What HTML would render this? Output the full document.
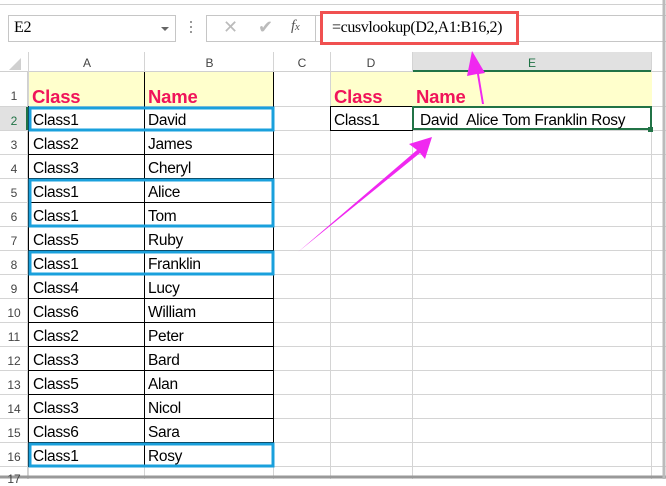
<!DOCTYPE html>
<html><head><style>
body{margin:0;width:666px;height:479px;overflow:hidden;background:#fff;font-family:"Liberation Sans",Arial,sans-serif;position:relative}
.a{position:absolute;box-sizing:border-box}
.t{position:absolute;font-size:15.5px;color:#000;white-space:nowrap;letter-spacing:-0.3px}
.h{position:absolute;font-size:12px;color:#444;text-align:center}
.hd{position:absolute;font-size:18.5px;font-weight:bold;color:#f0145a;letter-spacing:-0.2px}
</style></head><body>
<div class="a" style="left:0;top:4px;width:666px;height:1px;background:#d0d0d0"></div>
<div class="a" style="left:8px;top:15px;width:168px;height:27px;border:1px solid #c6c6c6"></div>
<div class="t" style="left:14px;top:19px;font-family:'Liberation Serif',serif;font-size:16px">E2</div>
<div class="a" style="left:161px;top:27px;width:0;height:0;border-left:4px solid transparent;border-right:4px solid transparent;border-top:4px solid #666"></div>
<div class="a" style="left:190px;top:21px;width:2px;height:2px;background:#999"></div>
<div class="a" style="left:190px;top:26px;width:2px;height:2px;background:#999"></div>
<div class="a" style="left:190px;top:31px;width:2px;height:2px;background:#999"></div>
<div class="a" style="left:206px;top:15px;width:110px;height:27px;border:1px solid #c6c6c6"></div>
<div class="t" style="left:223px;top:17px;color:#bbb;font-size:18px">✕</div>
<div class="t" style="left:258px;top:17px;color:#bbb;font-size:18px">✔</div>
<div class="t" style="left:291px;top:18px;color:#555;font-family:'Liberation Serif',serif;font-style:italic;font-size:15px">f<span style="font-size:11px">x</span></div>
<div class="a" style="left:316px;top:15px;width:350px;height:27px;border-top:1px solid #c6c6c6;border-bottom:1px solid #c6c6c6"></div>
<div class="a" style="left:320px;top:11px;width:199px;height:34px;border:3px solid #f05050;background:#fff"></div>
<div class="t" style="left:332px;top:19px;font-family:'Liberation Serif',serif;font-size:16px;letter-spacing:-0.4px">=cusvlookup(D2,A1:B16,2)</div>

<div class="a" style="left:0;top:52px;width:666px;height:20px;background:#fff;border-bottom:1px solid #d0d0d0"></div>
<div class="a" style="left:412px;top:52px;width:240px;height:20px;background:#e1e1e1;border-bottom:2px solid #217346"></div>
<div class="a" style="left:9px;top:58px;width:0;height:0;border-left:12px solid transparent;border-bottom:12px solid #d0d0d0"></div>
<div class="a" style="left:0;top:72px;width:28px;height:407px;border-right:1px solid #d0d0d0"></div>
<div class="a" style="left:0;top:107px;width:28px;height:24px;background:#e1e1e1;border-right:2px solid #217346"></div>
<div class="h" style="left:29px;top:56px;width:116px">A</div>
<div class="h" style="left:145px;top:56px;width:129px">B</div>
<div class="h" style="left:274px;top:56px;width:56px">C</div>
<div class="h" style="left:330px;top:56px;width:82px">D</div>
<div class="h" style="left:412px;top:56px;width:240px;color:#217346">E</div>

<svg class="a" style="left:0;top:0" width="666" height="479">
<g stroke="#d4d4d4" stroke-width="1">
<line x1="28.5" y1="52" x2="28.5" y2="479"/><line x1="144.5" y1="52" x2="144.5" y2="479"/><line x1="273.5" y1="52" x2="273.5" y2="479"/><line x1="330.5" y1="52" x2="330.5" y2="479"/><line x1="412.5" y1="52" x2="412.5" y2="479"/><line x1="651.5" y1="52" x2="651.5" y2="479"/>
<line x1="0" y1="106.5" x2="666" y2="106.5"/>
<line x1="0" y1="130.5" x2="666" y2="130.5"/><line x1="0" y1="154.5" x2="666" y2="154.5"/><line x1="0" y1="178.5" x2="666" y2="178.5"/><line x1="0" y1="202.5" x2="666" y2="202.5"/><line x1="0" y1="226.5" x2="666" y2="226.5"/><line x1="0" y1="250.5" x2="666" y2="250.5"/><line x1="0" y1="274.5" x2="666" y2="274.5"/><line x1="0" y1="298.5" x2="666" y2="298.5"/><line x1="0" y1="322.5" x2="666" y2="322.5"/><line x1="0" y1="346.5" x2="666" y2="346.5"/><line x1="0" y1="370.5" x2="666" y2="370.5"/><line x1="0" y1="394.5" x2="666" y2="394.5"/><line x1="0" y1="418.5" x2="666" y2="418.5"/><line x1="0" y1="442.5" x2="666" y2="442.5"/><line x1="0" y1="466.5" x2="666" y2="466.5"/>
</g>
<rect x="29" y="72" width="245" height="34" fill="#ffffcc"/>
<rect x="331" y="72" width="321" height="34" fill="#ffffcc"/>
<g stroke="#000" stroke-width="1" fill="none">
<line x1="144.5" y1="72" x2="144.5" y2="466"/><line x1="273.5" y1="72" x2="273.5" y2="466"/><line x1="28.5" y1="106" x2="28.5" y2="466"/>
<line x1="28" y1="130.5" x2="274" y2="130.5"/><line x1="28" y1="154.5" x2="274" y2="154.5"/><line x1="28" y1="178.5" x2="274" y2="178.5"/><line x1="28" y1="202.5" x2="274" y2="202.5"/><line x1="28" y1="226.5" x2="274" y2="226.5"/><line x1="28" y1="250.5" x2="274" y2="250.5"/><line x1="28" y1="274.5" x2="274" y2="274.5"/><line x1="28" y1="298.5" x2="274" y2="298.5"/><line x1="28" y1="322.5" x2="274" y2="322.5"/><line x1="28" y1="346.5" x2="274" y2="346.5"/><line x1="28" y1="370.5" x2="274" y2="370.5"/><line x1="28" y1="394.5" x2="274" y2="394.5"/><line x1="28" y1="418.5" x2="274" y2="418.5"/><line x1="28" y1="442.5" x2="274" y2="442.5"/><line x1="28" y1="466.5" x2="274" y2="466.5"/>
<rect x="330.5" y="106.5" width="82" height="24"/>
</g>
<g stroke="#1aa0dc" stroke-width="3" fill="none">
<rect x="30" y="108" width="243" height="22"/>
<rect x="30" y="180" width="243" height="46"/>
<rect x="30" y="252" width="243" height="22"/>
<rect x="30" y="444" width="243" height="22"/>
</g>
<rect x="413" y="107" width="238" height="22" stroke="#217346" stroke-width="2" fill="none"/>
<rect x="648" y="127" width="5" height="5" fill="#217346"/>
<line x1="0" y1="477" x2="666" y2="477" stroke="#999" stroke-width="3"/>
<line x1="664" y1="0" x2="664" y2="479" stroke="#bbb" stroke-width="3"/>
<polygon points="298,252 417,150 409,144 432,137 425,159 420,153" fill="#f028f0"/>
<polygon points="482,104 477,74 467,76 472,51 485,73 479,74 484,104" fill="#f028f0"/>
</svg>

<div class="h" style="left:0;top:89px;width:28px">1</div>
<div class="h" style="left:0;top:114px;width:28px;color:#217346">2</div>
<div class="h" style="left:0;top:138px;width:28px">3</div>
<div class="h" style="left:0;top:162px;width:28px">4</div>
<div class="h" style="left:0;top:186px;width:28px">5</div>
<div class="h" style="left:0;top:210px;width:28px">6</div>
<div class="h" style="left:0;top:234px;width:28px">7</div>
<div class="h" style="left:0;top:258px;width:28px">8</div>
<div class="h" style="left:0;top:282px;width:28px">9</div>
<div class="h" style="left:0;top:306px;width:28px">10</div>
<div class="h" style="left:0;top:330px;width:28px">11</div>
<div class="h" style="left:0;top:354px;width:28px">12</div>
<div class="h" style="left:0;top:378px;width:28px">13</div>
<div class="h" style="left:0;top:402px;width:28px">14</div>
<div class="h" style="left:0;top:426px;width:28px">15</div>
<div class="h" style="left:0;top:450px;width:28px">16</div>
<div class="h" style="left:0;top:472px;width:28px">17</div>

<div class="hd" style="left:32px;top:86px">Class</div>
<div class="hd" style="left:148px;top:86px">Name</div>
<div class="hd" style="left:334px;top:86px">Class</div>
<div class="hd" style="left:416px;top:86px">Name</div>

<div class="t" style="left:33px;top:112px">Class1</div><div class="t" style="left:148px;top:112px">David</div>
<div class="t" style="left:33px;top:136px">Class2</div><div class="t" style="left:148px;top:136px">James</div>
<div class="t" style="left:33px;top:160px">Class3</div><div class="t" style="left:148px;top:160px">Cheryl</div>
<div class="t" style="left:33px;top:184px">Class1</div><div class="t" style="left:148px;top:184px">Alice</div>
<div class="t" style="left:33px;top:208px">Class1</div><div class="t" style="left:148px;top:208px">Tom</div>
<div class="t" style="left:33px;top:232px">Class5</div><div class="t" style="left:148px;top:232px">Ruby</div>
<div class="t" style="left:33px;top:256px">Class1</div><div class="t" style="left:148px;top:256px">Franklin</div>
<div class="t" style="left:33px;top:280px">Class4</div><div class="t" style="left:148px;top:280px">Lucy</div>
<div class="t" style="left:33px;top:304px">Class6</div><div class="t" style="left:148px;top:304px">William</div>
<div class="t" style="left:33px;top:328px">Class2</div><div class="t" style="left:148px;top:328px">Peter</div>
<div class="t" style="left:33px;top:352px">Class3</div><div class="t" style="left:148px;top:352px">Bard</div>
<div class="t" style="left:33px;top:376px">Class5</div><div class="t" style="left:148px;top:376px">Alan</div>
<div class="t" style="left:33px;top:400px">Class3</div><div class="t" style="left:148px;top:400px">Nicol</div>
<div class="t" style="left:33px;top:424px">Class6</div><div class="t" style="left:148px;top:424px">Sara</div>
<div class="t" style="left:33px;top:448px">Class1</div><div class="t" style="left:148px;top:448px">Rosy</div>
<div class="t" style="left:334px;top:112px">Class1</div>
<div class="t" style="left:420px;top:112px">David &nbsp;Alice Tom Franklin Rosy</div>
</body></html>
